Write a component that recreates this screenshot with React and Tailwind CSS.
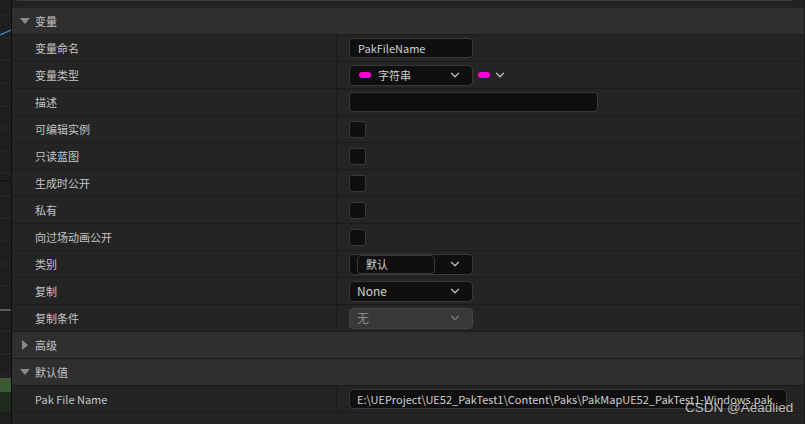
import { ChevronDown } from "lucide-react";

const font = { fontFamily: '"Noto Sans CJK SC", "Noto Sans", sans-serif' };

function Chevron({ className = "" }) {
  return <ChevronDown size={14} strokeWidth={2.2} className={className} />;
}

function Row({ label, children, indent = true }) {
  return (
    <div className="flex h-[27px] border-b border-[#1b1b1b] bg-[#242424]">
      <div
        className={`flex w-[325px] items-center border-r border-[#1b1b1b] text-[11px] text-[#c4c4c4] ${indent ? "pl-[23px]" : ""}`}
      >
        {label}
      </div>
      <div className="flex flex-1 items-center pl-[12px]">{children}</div>
    </div>
  );
}

function Header({ label, open = true }) {
  return (
    <div className="flex h-[27px] items-center border-b border-[#1b1b1b] bg-[#2f2f2f] text-[11px] text-[#c4c4c4]">
      <span className="flex w-[23px] justify-center pl-[2px]">
        {open ? (
          <span className="h-0 w-0 border-x-[5px] border-t-[6px] border-x-transparent border-t-[#8a8a8a]" />
        ) : (
          <span className="h-0 w-0 border-y-[5px] border-l-[6px] border-y-transparent border-l-[#8a8a8a]" />
        )}
      </span>
      {label}
    </div>
  );
}

function Check() {
  return <div className="h-[17px] w-[17px] rounded-[3px] border border-[#383838] bg-[#0f0f0f]" />;
}

function Combo({ children, disabled = false }) {
  return (
    <div
      className={`flex h-[21px] w-[124px] items-center justify-between rounded-[4px] border pr-[10px] ${disabled ? "border-[#444] bg-[#383838] text-[#8a8a8a]" : "border-[#383838] bg-[#0f0f0f] text-[#d0d0d0]"}`}
    >
      {children}
    </div>
  );
}

export default function App() {
  return (
    <div className="relative flex h-[424px] w-[805px] overflow-hidden bg-[#1b1b1b]" style={font}>
      {/* graph edge on the left */}
      <div className="w-[11px] shrink-0 bg-[#1e1e1e]">
        <svg width="11" height="424">
          {[15, 38, 60, 83, 106, 128, 151, 173, 196, 218, 241, 264, 286, 331, 354, 376].map((y) => (
            <line key={y} x1="0" x2="11" y1={y} y2={y} stroke="#2a2a2a" strokeWidth="1" />
          ))}
          <path d="M0 35 L11 30" stroke="#2f8fd0" strokeWidth="1.2" fill="none" />
          <line x1="0" x2="11" y1="181" y2="181" stroke="#0a0a0a" strokeWidth="1" />
          <line x1="0" x2="11" y1="310" y2="310" stroke="#9a9a9a" strokeWidth="1" />
          <rect x="0" y="378" width="11" height="14" fill="#3d5a36" />
          <rect x="0" y="392" width="11" height="20" fill="#1f2b1c" />
        </svg>
      </div>
      <div className="w-px shrink-0 bg-[#0e0e0e]" />

      <div className="flex min-w-0 flex-1 flex-col border-r border-[#1b1b1b]">
        <div className="h-[8px] shrink-0 bg-[#222]">
          <div className="ml-[5px] mr-[12px] h-[1px] bg-[#393939]" />
        </div>

        <Header label="变量" />
        <Row label="变量命名">
          <div className="flex h-[20px] w-[124px] items-center rounded-[4px] border border-[#383838] bg-[#0f0f0f] pl-[8px] text-[11px] text-[#d0d0d0]">
            PakFileName
          </div>
        </Row>
        <Row label="变量类型">
          <Combo>
            <span className="flex items-center text-[11px]">
              <span className="ml-[9px] mr-[7px] h-[6px] w-[12px] rounded-full bg-[#ff00d8]" />
              字符串
            </span>
            <Chevron className="text-[#bbb]" />
          </Combo>
          <span className="ml-[5px] h-[6px] w-[12px] rounded-full bg-[#ff00d8]" />
          <Chevron className="ml-[3px] text-[#bbb]" />
        </Row>
        <Row label="描述">
          <div className="h-[20px] w-[249px] rounded-[4px] border border-[#383838] bg-[#0f0f0f]" />
        </Row>
        <Row label="可编辑实例">
          <Check />
        </Row>
        <Row label="只读蓝图">
          <Check />
        </Row>
        <Row label="生成时公开">
          <Check />
        </Row>
        <Row label="私有">
          <Check />
        </Row>
        <Row label="向过场动画公开">
          <Check />
        </Row>
        <Row label="类别">
          <Combo>
            <span className="ml-[7px] flex h-[19px] w-[78px] items-center rounded-[4px] border border-[#383838] pl-[8px] text-[11px]">
              默认
            </span>
            <Chevron className="text-[#bbb]" />
          </Combo>
        </Row>
        <Row label="复制">
          <Combo>
            <span className="ml-[7px] text-[12px]">None</span>
            <Chevron className="text-[#bbb]" />
          </Combo>
        </Row>
        <Row label="复制条件">
          <Combo disabled>
            <span className="ml-[7px] text-[12px]">无</span>
            <Chevron className="text-[#777]" />
          </Combo>
        </Row>
        <Header label="高级" open={false} />
        <Header label="默认值" />
        <Row label="Pak File Name">
          <div className="flex h-[20px] w-[438px] items-center rounded-[4px] border border-[#383838] bg-[#0f0f0f] pl-[7px] text-[11px] leading-[14px] text-[#d0d0d0]">
            E:\UEProject\UE52_PakTest1\Content\Paks\PakMapUE52_PakTest1-Windows.pak
          </div>
        </Row>
        <div className="flex-1 bg-[#242424]" />
      </div>

      <div
        className="absolute left-[685px] top-[402px] text-[13.5px] leading-[12px] text-[#cfcfcf]/90"
        style={{ fontFamily: '"Liberation Sans", Arial, sans-serif' }}
      >
        CSDN @Aeadlied
      </div>
    </div>
  );
}
